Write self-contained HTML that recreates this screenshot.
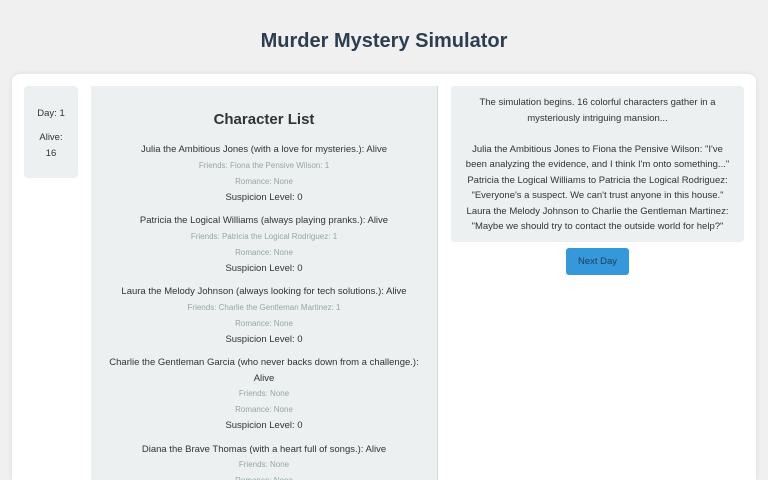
<!DOCTYPE html>
<html><head><meta charset="utf-8"><style>
*{margin:0;padding:0;box-sizing:border-box}
html,body{width:768px;height:480px;overflow:hidden}
body{background:#f0f0f0;font-family:"Liberation Sans",Arial,sans-serif;color:#333;position:relative}
h1{position:absolute;top:29px;left:0;width:768px;text-align:center;font-size:20px;color:#2c3e50;line-height:24px}
.wrap{position:absolute;left:12px;top:74px;width:744px;height:406px;background:#fff;border-radius:8px 8px 0 0;box-shadow:0 0 6px rgba(0,0,0,.08);overflow:hidden}
.stats{position:absolute;left:12px;top:12px;width:54px;height:92px;background:#ecf0f1;border-radius:4px;text-align:center;font-size:9.5px;padding-top:20px}
.stats div{line-height:16px}
.list{position:absolute;left:79px;top:12px;width:347px;height:394px;overflow:hidden;background:#ecf0f1;text-align:center;border-right:1px solid #d5dadc}
.list h2{font-size:15px;margin-top:25px;line-height:18px;margin-bottom:13px}
.e{margin-bottom:8.5px}
.n{font-size:9.5px;line-height:15.5px;padding:0 14px}
.s{font-size:8px;line-height:16px;color:#95a5a6}
.l{font-size:9.5px;line-height:15px}
.log{position:absolute;left:439px;top:12px;width:293px;height:156px;background:#ecf0f1;border-radius:4px;text-align:center;font-size:9.5px;line-height:15.5px;padding:9px 10px 8px}
.btn{position:absolute;left:554px;top:174px;width:63px;height:27px;background:#3498db;border-radius:3px;font-size:9.5px;line-height:27px;text-align:center;color:#1f3b57}
</style></head><body>
<h1>Murder Mystery Simulator</h1>
<div class="wrap">
<div class="stats"><div>Day: 1</div><div style="margin-top:8px">Alive:</div><div>16</div></div>
<div class="list"><h2>Character List</h2>
<div class="e"><div class="n">Julia the Ambitious Jones (with a love for mysteries.): Alive</div><div class="s">Friends: Fiona the Pensive Wilson: 1</div><div class="s">Romance: None</div><div class="l">Suspicion Level: 0</div></div>
<div class="e"><div class="n">Patricia the Logical Williams (always playing pranks.): Alive</div><div class="s">Friends: Patricia the Logical Rodriguez: 1</div><div class="s">Romance: None</div><div class="l">Suspicion Level: 0</div></div>
<div class="e"><div class="n">Laura the Melody Johnson (always looking for tech solutions.): Alive</div><div class="s">Friends: Charlie the Gentleman Martinez: 1</div><div class="s">Romance: None</div><div class="l">Suspicion Level: 0</div></div>
<div class="e"><div class="n">Charlie the Gentleman Garcia (who never backs down from a challenge.): Alive</div><div class="s">Friends: None</div><div class="s">Romance: None</div><div class="l">Suspicion Level: 0</div></div>
<div class="e"><div class="n">Diana the Brave Thomas (with a heart full of songs.): Alive</div><div class="s">Friends: None</div><div class="s">Romance: None</div><div class="l">Suspicion Level: 0</div></div>
</div>
<div class="log">The simulation begins. 16 colorful characters gather in a mysteriously intriguing mansion...<br><br>Julia the Ambitious Jones to Fiona the Pensive Wilson: "I've been analyzing the evidence, and I think I'm onto something..."<br>Patricia the Logical Williams to Patricia the Logical Rodriguez: "Everyone's a suspect. We can't trust anyone in this house."<br>Laura the Melody Johnson to Charlie the Gentleman Martinez: "Maybe we should try to contact the outside world for help?"</div>
<div class="btn">Next Day</div>
</div>
</body></html>
